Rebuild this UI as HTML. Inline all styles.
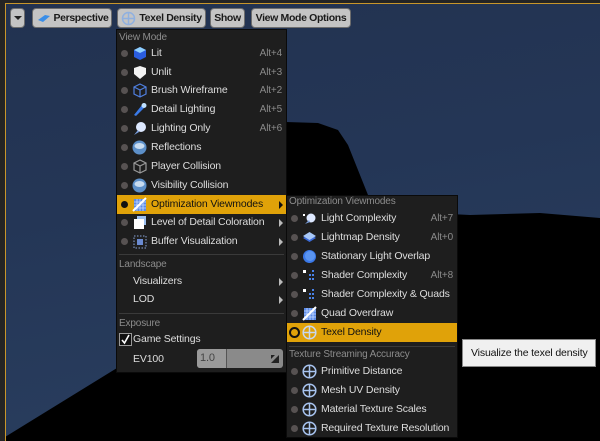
<!DOCTYPE html>
<html><head><meta charset="utf-8"><style>
*{margin:0;padding:0;box-sizing:border-box}
body{width:600px;height:441px;overflow:hidden;position:relative;background:#000;font-family:"Liberation Sans",sans-serif;font-size:10.5px;letter-spacing:-0.15px}
.vp{position:absolute;left:0;top:0;width:600px;height:441px;background:linear-gradient(170deg,#223250 0%,#243656 40%,#2a3f60 100%)}
.frame{position:absolute;left:0;top:0;width:5px;height:441px;background:#242424}
.yl{position:absolute;left:5px;top:3px;width:1px;height:438px;background:#c8962a}
.yt{position:absolute;left:5px;top:3px;width:595px;height:1px;background:#c8962a}
.topb{position:absolute;left:0;top:0;width:600px;height:3px;background:#242424}
.btn{position:absolute;top:8px;height:20px;background:#c4c4c4;border:1px solid #6d6d6d;border-radius:4px;color:#1a1a1a;font-weight:bold;font-size:10.5px;letter-spacing:-0.35px;line-height:18px;white-space:nowrap;text-align:center}
.menu{position:absolute;background:#1e1e1e;border:1px solid #0a0a0a}
.row{position:absolute;left:0;right:0;height:19px;color:#ddd;line-height:19px;white-space:nowrap}
.row .b{position:absolute;left:4px;top:6px;width:7px;height:7px;border-radius:50%;background:#575252}
.row .i{position:absolute;left:15px;top:2px;width:15px;height:15px}
.row .t{position:absolute;left:34px}
.row .k{position:absolute;right:4px;color:#8a8a8a;font-size:10px}
.row .ar{position:absolute;right:3px;top:6px;width:0;height:0;border-left:4px solid #bbb;border-top:4px solid transparent;border-bottom:4px solid transparent}
.hl{background:#e0a209;color:#111}
.hl .b{background:#111}
.hd{position:absolute;left:2px;color:#8c8c8c;font-size:10px;height:14px;line-height:14px;white-space:nowrap}
.sep{position:absolute;left:2px;right:2px;height:1px;background:#3a3a3a}
</style></head><body>
<div class="vp"></div>
<svg style="position:absolute;left:0;top:0" width="600" height="441"><polygon fill="#000" points="286,122 318,123 338,130 348,145 368,195 430,213 470,215 540,213 600,218 600,441 5,441 5,437 117,368 117,372 286,372"/></svg>
<div class="topb"></div><div class="frame"></div><div class="yt"></div><div class="yl"></div>

<div class="btn" style="left:10px;width:15px"><div style="position:absolute;left:3px;top:7px;border-top:4px solid #222;border-left:4px solid transparent;border-right:4px solid transparent"></div></div>
<div class="btn" style="left:32px;width:80px;padding-left:18px"><svg style="position:absolute;left:4px;top:4px" width="14" height="10"><path d="M1 7 L8 2 L13 3 L6 9 Z" fill="#3a8ee8"/></svg>Perspective</div>
<div class="btn" style="left:117px;width:89px;padding-left:18px"><svg style="position:absolute;left:3px;top:2px" width="15" height="15"><circle cx="7.5" cy="7.5" r="6" fill="none" stroke="#8fb0e0" stroke-width="1.5"/><path d="M7.5 1.5V13.5M1.5 7.5H13.5" stroke="#8fb0e0" stroke-width="1.5"/></svg>Texel Density</div>
<div class="btn" style="left:210px;width:35px">Show</div>
<div class="btn" style="left:251px;width:100px">View Mode Options</div>

<div class="menu" style="left:116px;top:29px;width:171px;height:344px">
<div class="hd" style="top:1px">View Mode</div>
<div class="row" style="top:14px"><span class="b"></span><svg class="i"><path d="M2 4L8 1L14 4V11L8 14L2 11Z" fill="#2a5de0"/><path d="M2 4L8 1L14 4L8 7Z" fill="#8fd0ff"/></svg><span class="t">Lit</span><span class="k">Alt+4</span></div>
<div class="row" style="top:33px"><span class="b"></span><svg class="i"><path d="M2 3L8 1L14 3V9L8 14L2 9Z" fill="#f2f2f2"/></svg><span class="t">Unlit</span><span class="k">Alt+3</span></div>
<div class="row" style="top:51px"><span class="b"></span><svg class="i"><path d="M2 4L8 1L14 4V11L8 14L2 11ZM2 4L8 7L14 4M8 7V14" fill="none" stroke="#4f7fe0" stroke-width="1.2"/></svg><span class="t">Brush Wireframe</span><span class="k">Alt+2</span></div>
<div class="row" style="top:70px"><span class="b"></span><svg class="i"><path d="M2 13L10 3L13 5L4 14Z" fill="#3a7ae8"/><circle cx="12" cy="3.5" r="2.5" fill="#bfe0ff"/></svg><span class="t">Detail Lighting</span><span class="k">Alt+5</span></div>
<div class="row" style="top:89px"><span class="b"></span><svg class="i"><circle cx="9" cy="6" r="5" fill="#dde8ff"/><path d="M2 14L6 9L7 11Z" fill="#7aa0e0"/></svg><span class="t">Lighting Only</span><span class="k">Alt+6</span></div>
<div class="row" style="top:108px"><span class="b"></span><svg class="i"><circle cx="7.5" cy="7.5" r="7" fill="#5c8fc8"/><ellipse cx="7.5" cy="6" rx="5" ry="3" fill="#c8dcf0"/></svg><span class="t">Reflections</span></div>
<div class="row" style="top:127px"><span class="b"></span><svg class="i"><path d="M2 4L8 1L14 4V11L8 14L2 11ZM2 4L8 7L14 4M8 7V14" fill="none" stroke="#999" stroke-width="1.2"/></svg><span class="t">Player Collision</span></div>
<div class="row" style="top:146px"><span class="b"></span><svg class="i"><circle cx="7.5" cy="7.5" r="7" fill="#5c8fc8"/><ellipse cx="7.5" cy="6" rx="5" ry="3" fill="#c8dcf0"/></svg><span class="t">Visibility Collision</span></div>
<div class="row hl" style="top:165px"><span class="b"></span><svg class="i"><rect x="2" y="2" width="12" height="12" fill="#5a8ae8"/><path d="M2 5H14M2 8H14M2 11H14M5 2V14M8 2V14M11 2V14" stroke="#c8dcff" stroke-width=".8"/><path d="M1 14L14 1" stroke="#fff" stroke-width="2"/></svg><span class="t">Optimization Viewmodes</span><span class="ar" style="border-left-color:#111"></span></div>
<div class="row" style="top:183px"><span class="b"></span><svg class="i"><rect x="5" y="1" width="9" height="9" fill="#9cc0f0"/><rect x="2" y="4" width="10" height="10" fill="#fff"/></svg><span class="t">Level of Detail Coloration</span><span class="ar"></span></div>
<div class="row" style="top:202px"><span class="b"></span><svg class="i"><path d="M2 2H14V14H2Z" fill="none" stroke="#8aa4d8" stroke-dasharray="1.5 1.5"/><rect x="5" y="5" width="6" height="6" fill="#6a8ad0"/></svg><span class="t">Buffer Visualization</span><span class="ar"></span></div>
<div class="sep" style="top:224px"></div>
<div class="hd" style="top:228px">Landscape</div>
<div class="row" style="top:242px"><span class="t" style="left:16px">Visualizers</span><span class="ar"></span></div>
<div class="row" style="top:260px"><span class="t" style="left:16px">LOD</span><span class="ar"></span></div>
<div class="sep" style="top:283px"></div>
<div class="hd" style="top:287px">Exposure</div>
<div class="row" style="top:300px"><svg style="position:absolute;left:2px;top:3px" width="13" height="13"><rect x=".5" y=".5" width="12" height="12" fill="#111" stroke="#999"/><path d="M3 7L5.5 10L10 2" stroke="#fff" stroke-width="1.6" fill="none"/></svg><span class="t" style="left:16px">Game Settings</span></div>
<div class="row" style="top:320px"><span class="t" style="left:16px">EV100</span></div>
<div style="position:absolute;left:80px;top:319px;width:86px;height:19px;background:#8a8a8a;border-radius:3px"><div style="position:absolute;left:0;top:0;width:30px;height:19px;background:#9a9a9a;border-right:1px solid #555;border-radius:3px 0 0 3px;color:#444;line-height:19px;padding-left:3px;font-size:11px">1.0</div><svg style="position:absolute;right:4px;top:6px" width="8" height="8"><path d="M0 8L8 0V8Z" fill="#222"/><path d="M0 0H4L0 4Z" fill="#222"/></svg></div>
</div>

<div class="menu" style="left:286px;top:195px;width:172px;height:243px">
<div class="hd" style="top:-1px">Optimization Viewmodes</div>
<div class="row" style="top:13px"><span class="b"></span><svg class="i"><circle cx="9" cy="7" r="4.5" fill="#dde8ff"/><path d="M3 13L7 9L8 11Z" fill="#7aa0e0"/><rect x="1" y="3" width="2" height="2" fill="#fff"/></svg><span class="t">Light Complexity</span><span class="k">Alt+7</span></div>
<div class="row" style="top:32px"><span class="b"></span><svg class="i"><path d="M1 8L7.5 4L14 8L7.5 12Z" fill="#3a6ad8"/><path d="M1 6L7.5 2L14 6L7.5 10Z" fill="#a8c8f8"/></svg><span class="t">Lightmap Density</span><span class="k">Alt+0</span></div>
<div class="row" style="top:51px"><span class="b"></span><svg class="i"><circle cx="7.5" cy="7.5" r="6.5" fill="#3a78e8"/><circle cx="8" cy="7" r="5" fill="#5a94f0"/></svg><span class="t">Stationary Light Overlap</span></div>
<div class="row" style="top:70px"><span class="b"></span><svg class="i"><rect x="1" y="2" width="3" height="3" fill="#fff"/><g fill="#4a82e8"><rect x="10" y="2" width="2" height="2"/><rect x="7" y="6" width="2" height="2"/><rect x="10" y="6" width="2" height="2"/><rect x="10" y="10" width="2" height="2"/><rect x="7" y="10" width="2" height="2"/></g></svg><span class="t">Shader Complexity</span><span class="k">Alt+8</span></div>
<div class="row" style="top:89px"><span class="b"></span><svg class="i"><rect x="1" y="2" width="3" height="3" fill="#fff"/><g fill="#4a82e8"><rect x="10" y="2" width="2" height="2"/><rect x="7" y="6" width="2" height="2"/><rect x="10" y="6" width="2" height="2"/><rect x="10" y="10" width="2" height="2"/><rect x="7" y="10" width="2" height="2"/></g></svg><span class="t">Shader Complexity &amp; Quads</span></div>
<div class="row" style="top:108px"><span class="b"></span><svg class="i"><rect x="2" y="2" width="12" height="12" fill="#5a8ae8"/><path d="M2 5H14M2 8H14M2 11H14M5 2V14M8 2V14M11 2V14" stroke="#c8dcff" stroke-width=".8"/><path d="M1 14L14 1" stroke="#fff" stroke-width="2"/></svg><span class="t">Quad Overdraw</span></div>
<div class="row hl" style="top:127px"><span style="position:absolute;left:2px;top:4px;width:11px;height:11px;border-radius:50%;border:2px solid #111"></span><svg class="i"><circle cx="7.5" cy="7.5" r="6.3" fill="none" stroke="#c8d8f0" stroke-width="1.5"/><path d="M7.5 1.5V13.5M1.5 7.5H13.5" stroke="#c8d8f0" stroke-width="1.5"/></svg><span class="t">Texel Density</span></div>
<div class="sep" style="top:150px"></div>
<div class="hd" style="top:152px">Texture Streaming Accuracy</div>
<div class="row" style="top:166px"><span class="b"></span><svg class="i"><circle cx="7.5" cy="7.5" r="6.3" fill="none" stroke="#a8c4f0" stroke-width="1.5"/><path d="M7.5 1.5V13.5M1.5 7.5H13.5" stroke="#a8c4f0" stroke-width="1.5"/></svg><span class="t">Primitive Distance</span></div>
<div class="row" style="top:185px"><span class="b"></span><svg class="i"><circle cx="7.5" cy="7.5" r="6.3" fill="none" stroke="#a8c4f0" stroke-width="1.5"/><path d="M7.5 1.5V13.5M1.5 7.5H13.5" stroke="#a8c4f0" stroke-width="1.5"/></svg><span class="t">Mesh UV Density</span></div>
<div class="row" style="top:204px"><span class="b"></span><svg class="i"><circle cx="7.5" cy="7.5" r="6.3" fill="none" stroke="#a8c4f0" stroke-width="1.5"/><path d="M7.5 1.5V13.5M1.5 7.5H13.5" stroke="#a8c4f0" stroke-width="1.5"/></svg><span class="t">Material Texture Scales</span></div>
<div class="row" style="top:223px"><span class="b"></span><svg class="i"><circle cx="7.5" cy="7.5" r="6.3" fill="none" stroke="#a8c4f0" stroke-width="1.5"/><path d="M7.5 1.5V13.5M1.5 7.5H13.5" stroke="#a8c4f0" stroke-width="1.5"/></svg><span class="t">Required Texture Resolution</span></div>
</div>

<div style="position:absolute;left:462px;top:339px;width:134px;height:28px;background:#f0f0f0;border:1px solid #888;color:#111;line-height:26px;padding-left:8px;font-size:10.5px;white-space:nowrap">Visualize the texel density</div>
</body></html>
